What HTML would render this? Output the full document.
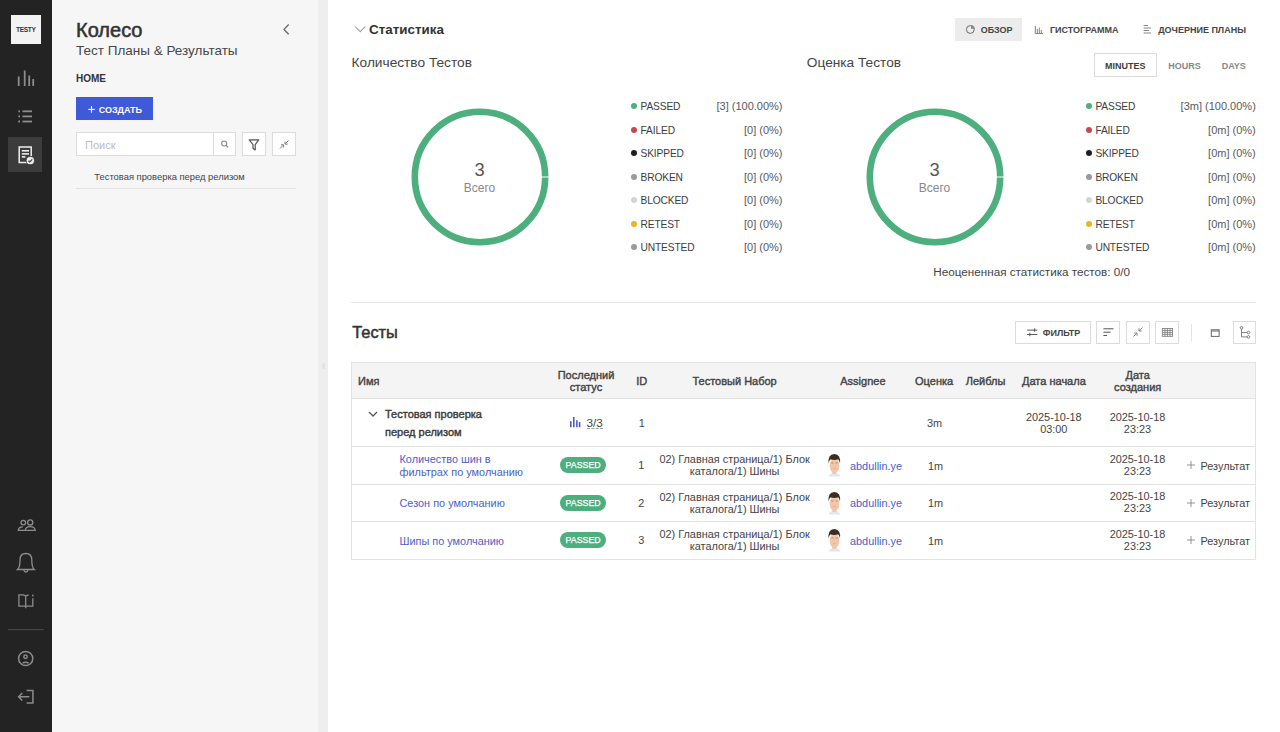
<!DOCTYPE html>
<html><head><meta charset="utf-8">
<style>
*{box-sizing:border-box;margin:0;padding:0}
html,body{width:1280px;height:732px;overflow:hidden;background:#fff;font-family:"Liberation Sans",sans-serif;color:#333}
.abs{position:absolute}
.t{position:absolute;white-space:nowrap;line-height:1}
svg{overflow:visible}
</style></head>
<body>
<div class="abs" style="left:0px;top:0px;width:52px;height:732px;background:#232323;"></div>
<div class="abs" style="left:11px;top:15px;width:30px;height:29px;background:#f3f3f3;"></div>
<div class="t" style="left:-274.20px;width:600px;text-align:center;top:27.00px;font-size:6.6px;font-weight:bold;color:#333;letter-spacing:-0.35px;">TESTY</div>
<svg class="abs" style="left:0;top:60px" width="52" height="30" viewBox="0 60 52 30">
<g stroke="#8c8c8c" stroke-width="1.8" stroke-linecap="butt">
<line x1="18.7" y1="86" x2="18.7" y2="76.5"/>
<line x1="24.7" y1="86" x2="24.7" y2="70.5"/>
<line x1="29.2" y1="86" x2="29.2" y2="75.5"/>
<line x1="33.2" y1="86" x2="33.2" y2="79"/>
</g></svg>
<svg class="abs" style="left:0;top:100px" width="52" height="30" viewBox="0 100 52 30">
<g stroke="#8c8c8c" stroke-width="1.8">
<line x1="22.5" y1="111.3" x2="32" y2="111.3"/>
<line x1="22.5" y1="116.4" x2="32" y2="116.4"/>
<line x1="22.5" y1="121.5" x2="32" y2="121.5"/>
<line x1="18.3" y1="111.3" x2="20" y2="111.3"/>
<line x1="18.3" y1="116.4" x2="20" y2="116.4"/>
<line x1="18.3" y1="121.5" x2="20" y2="121.5"/>
</g></svg>
<div class="abs" style="left:8px;top:137px;width:34px;height:35px;background:#3c3c3c;"></div>
<svg class="abs" style="left:0;top:137px" width="52" height="35" viewBox="0 137 52 35">
<path d="M28.5 162.5 H19.2 V147 H31.2 V156" fill="none" stroke="#eee" stroke-width="1.5"/>
<g stroke="#eee" stroke-width="1.6"><line x1="21.8" y1="150.8" x2="29" y2="150.8"/><line x1="21.8" y1="153.9" x2="29" y2="153.9"/><line x1="21.8" y1="156.9" x2="25.4" y2="156.9"/></g>
<circle cx="30.3" cy="160.6" r="4.1" fill="#eee" stroke="#3c3c3c" stroke-width="0.8"/>
<path d="M28.4 160.8 L29.8 162 L32.2 159.4" fill="none" stroke="#3c3c3c" stroke-width="1.2"/>
</svg>
<svg class="abs" style="left:0;top:510px" width="52" height="210" viewBox="0 510 52 210">
<g fill="none" stroke="#8c8c8c" stroke-width="1.3">
<circle cx="23.3" cy="522.6" r="2.3"/><path d="M25.5 530.3 H18.3 Q18.6 526.9 22.8 526.8"/>
<circle cx="30.2" cy="522.4" r="2.6"/><path d="M25.2 530.3 Q25.6 526.6 30.2 526.6 Q34.8 526.6 35.2 530.3 Z"/>
<path d="M17.5 569.5 H34.3 Q31.8 567.5 31.8 560 Q31.8 553.5 25.9 553.5 Q20 553.5 20 560 Q20 567.5 17.5 569.5 Z"/>
<path d="M23.8 569.8 Q24.3 572 25.9 572 Q27.5 572 28 569.8"/>
<path d="M25.7 595.9 L23 594.8 H18.9 V606.2 H32.8 V598.3 M25.7 595.9 L28.6 594.8 M25.7 595.9 V608.2"/>
<line x1="32.8" y1="594.6" x2="32.8" y2="596.4"/>
<g stroke-width="1.5"><circle cx="25.7" cy="658.5" r="7.1"/><circle cx="25.5" cy="656.8" r="1.7"/><path d="M22.6 663.2 Q25.6 661.2 28.6 663.2"/>
<path d="M26.6 690.5 H32.9 V703 H26.6"/><path d="M29.3 696.8 H18.6 M22.3 693 L18.6 696.8 L22.3 700.6"/></g>
</g>
<line x1="8" y1="629.6" x2="43.7" y2="629.6" stroke="#444" stroke-width="1.2"/>
</svg>
<div class="abs" style="left:52px;top:0px;width:266px;height:732px;background:#f6f6f6;"></div>
<div class="abs" style="left:318px;top:0px;width:10px;height:732px;background:#eeeeee;"></div>
<div class="abs" style="left:322px;top:363px;width:3px;height:6px;border-radius:1.5px;background:#e3e3e3"></div>
<div class="t" style="left:76.00px;top:20.00px;font-size:20px;color:#333;-webkit-text-stroke:0.55px #333;">Колесо</div>
<div class="t" style="left:76.00px;top:44.00px;font-size:13.5px;color:#474747;">Тест Планы &amp; Результаты</div>
<svg class="abs" style="left:278px;top:20px" width="16" height="20" viewBox="278 20 16 20"><path d="M288.7 24.5 L284 29.4 L288.7 34.3" fill="none" stroke="#666" stroke-width="1.3"/></svg>
<div class="t" style="left:76.00px;top:74.00px;font-size:10px;font-weight:bold;color:#333;">HOME</div>
<div class="abs" style="left:76px;top:97px;width:77px;height:23px;background:#3e5ad9;"></div>
<svg class="abs" style="left:86px;top:102px" width="12" height="14" viewBox="86 102 12 14"><g stroke="#fff" stroke-width="1.1"><line x1="88.2" y1="109.4" x2="94.8" y2="109.4"/><line x1="91.5" y1="106.1" x2="91.5" y2="112.7"/></g></svg>
<div class="t" style="left:98.70px;top:106.00px;font-size:9px;font-weight:bold;color:#fff;">СОЗДАТЬ</div>
<div class="abs" style="left:76px;top:132px;width:160px;height:24px;background:#fff;border:1px solid #dcdcdc;"></div>
<div class="abs" style="left:213px;top:132px;width:1px;height:24px;background:#dcdcdc;"></div>
<div class="t" style="left:85.00px;top:140.00px;font-size:11px;color:#bdbdbd;">Поиск</div>
<svg class="abs" style="left:218px;top:138px" width="14" height="14" viewBox="218 138 14 14"><circle cx="224.2" cy="143.5" r="2.5" fill="none" stroke="#888" stroke-width="1.1"/><line x1="226" y1="145.3" x2="228.1" y2="147.4" stroke="#888" stroke-width="1.3"/></svg>
<div class="abs" style="left:242px;top:132px;width:24px;height:24px;background:#fff;border:1px solid #dcdcdc;"></div>
<svg class="abs" style="left:246px;top:137px" width="16" height="16" viewBox="246 137 16 16"><path d="M249.3 139.8 H258.7 L255.2 144.7 V150 L253 148.2 V144.7 Z" fill="none" stroke="#555" stroke-width="1.2" stroke-linejoin="round"/></svg>
<div class="abs" style="left:272px;top:132px;width:24px;height:24px;background:#fff;border:1px solid #dcdcdc;"></div>
<svg class="abs" style="left:276px;top:137px" width="16" height="16" viewBox="276 137 16 16"><g fill="none" stroke="#777" stroke-width="1"><path d="M280 148.5 L283 145.5 M281 144.8 H283.6 V147.4"/><path d="M288.5 140.5 L285.5 143.5 M287.6 144.1 H285 V141.5"/></g></svg>
<div class="t" style="left:94.30px;top:172.00px;font-size:9.4px;color:#444;">Тестовая проверка перед релизом</div>
<div class="abs" style="left:76px;top:188px;width:220px;height:1px;background:#e2e2e2;"></div>
<svg class="abs" style="left:352px;top:22px" width="16" height="14" viewBox="352 22 16 14"><path d="M355.2 26.6 L360.2 31.6 L365.2 26.6" fill="none" stroke="#a3a3a3" stroke-width="1.2"/></svg>
<div class="t" style="left:369.00px;top:23.00px;font-size:13.4px;font-weight:bold;color:#333;">Статистика</div>
<div class="abs" style="left:955px;top:18px;width:67px;height:23px;background:#ececec;"></div>
<svg class="abs" style="left:962px;top:24px" width="14" height="12" viewBox="962 24 14 12"><g fill="none" stroke="#6a6a6a" stroke-width="1"><circle cx="970.3" cy="29.5" r="3.9"/></g><path d="M971 24.9 A4.4 4.4 0 0 1 974.9 28.8 H971 Z" fill="#888"/></svg>
<div class="t" style="left:980.70px;top:26.00px;font-size:9px;font-weight:bold;color:#454545;">ОБЗОР</div>
<svg class="abs" style="left:1033px;top:23px" width="12" height="12" viewBox="1033 23 12 12"><g stroke="#777" stroke-width="0.9"><path d="M1035.3 25.8 V33.5 H1043" fill="none"/><line x1="1037.3" y1="33" x2="1037.3" y2="29"/><line x1="1039.3" y1="33" x2="1039.3" y2="27.5"/><line x1="1041.3" y1="33" x2="1041.3" y2="30"/></g></svg>
<div class="t" style="left:1050.00px;top:26.00px;font-size:9px;font-weight:bold;color:#454545;">ГИСТОГРАММА</div>
<svg class="abs" style="left:1141px;top:23px" width="12" height="12" viewBox="1141 23 12 12"><g stroke="#777" stroke-width="0.9"><line x1="1143.7" y1="25.5" x2="1148" y2="25.5"/><line x1="1143.7" y1="28" x2="1151" y2="28"/><line x1="1143.7" y1="30.5" x2="1149" y2="30.5"/><line x1="1143.7" y1="33" x2="1151" y2="33"/></g></svg>
<div class="t" style="left:1158.20px;top:26.00px;font-size:9px;font-weight:bold;color:#454545;">ДОЧЕРНИЕ ПЛАНЫ</div>
<div class="t" style="left:351.60px;top:56.00px;font-size:13.7px;color:#444;">Количество Тестов</div>
<div class="t" style="left:806.80px;top:56.00px;font-size:13.7px;color:#444;">Оценка Тестов</div>
<div class="abs" style="left:1094px;top:53px;width:63px;height:24px;background:#fff;border:1px solid #dcdcdc;"></div>
<div class="t" style="left:1105.00px;top:62.00px;font-size:9px;font-weight:bold;color:#3d3d3d;">MINUTES</div>
<div class="t" style="left:1168.20px;top:62.00px;font-size:9px;font-weight:bold;color:#888;">HOURS</div>
<div class="t" style="left:1221.70px;top:62.00px;font-size:9px;font-weight:bold;color:#888;">DAYS</div>
<svg class="abs" style="left:404.5px;top:101.80000000000001px" width="150" height="150" viewBox="404.5 101.80000000000001 150 150">
<circle cx="479.5" cy="176.8" r="65.2" fill="none" stroke="#4caf7d" stroke-width="6.6"/>
<line x1="540.5" y1="176.8" x2="549.5" y2="176.8" stroke="#fff" stroke-width="1"/>
</svg>
<div class="t" style="left:179.50px;width:600px;text-align:center;top:161.00px;font-size:18.3px;color:#555;">3</div>
<div class="t" style="left:179.50px;width:600px;text-align:center;top:182.00px;font-size:12px;color:#888;">Всего</div>
<svg class="abs" style="left:859.5px;top:101.6px" width="150" height="150" viewBox="859.5 101.6 150 150">
<circle cx="934.5" cy="176.6" r="65.2" fill="none" stroke="#4caf7d" stroke-width="6.6"/>
<line x1="995.5" y1="176.6" x2="1004.5" y2="176.6" stroke="#fff" stroke-width="1"/>
</svg>
<div class="t" style="left:634.50px;width:600px;text-align:center;top:161.00px;font-size:18.3px;color:#555;">3</div>
<div class="t" style="left:634.50px;width:600px;text-align:center;top:182.00px;font-size:12px;color:#888;">Всего</div>
<div class="abs" style="left:631px;top:103.2px;width:6px;height:6px;border-radius:50%;background:#4caf7d"></div>
<div class="t" style="left:640.50px;top:102.00px;font-size:10.2px;color:#3d3d3d;letter-spacing:-0.12px;">PASSED</div>
<div class="t" style="left:182.50px;width:600px;text-align:right;top:101.00px;font-size:11px;color:#5a5a5a;">[3] (100.00%)</div>
<div class="abs" style="left:631px;top:126.69999999999999px;width:6px;height:6px;border-radius:50%;background:#c9474f"></div>
<div class="t" style="left:640.50px;top:126.00px;font-size:10.2px;color:#3d3d3d;letter-spacing:-0.12px;">FAILED</div>
<div class="t" style="left:182.50px;width:600px;text-align:right;top:125.00px;font-size:11px;color:#5a5a5a;">[0] (0%)</div>
<div class="abs" style="left:631px;top:150.2px;width:6px;height:6px;border-radius:50%;background:#1f1f1f"></div>
<div class="t" style="left:640.50px;top:149.00px;font-size:10.2px;color:#3d3d3d;letter-spacing:-0.12px;">SKIPPED</div>
<div class="t" style="left:182.50px;width:600px;text-align:right;top:148.00px;font-size:11px;color:#5a5a5a;">[0] (0%)</div>
<div class="abs" style="left:631px;top:173.7px;width:6px;height:6px;border-radius:50%;background:#9a9a9a"></div>
<div class="t" style="left:640.50px;top:173.00px;font-size:10.2px;color:#3d3d3d;letter-spacing:-0.12px;">BROKEN</div>
<div class="t" style="left:182.50px;width:600px;text-align:right;top:172.00px;font-size:11px;color:#5a5a5a;">[0] (0%)</div>
<div class="abs" style="left:631px;top:197.2px;width:6px;height:6px;border-radius:50%;background:#d4d4d4"></div>
<div class="t" style="left:640.50px;top:196.00px;font-size:10.2px;color:#3d3d3d;letter-spacing:-0.12px;">BLOCKED</div>
<div class="t" style="left:182.50px;width:600px;text-align:right;top:195.00px;font-size:11px;color:#5a5a5a;">[0] (0%)</div>
<div class="abs" style="left:631px;top:220.7px;width:6px;height:6px;border-radius:50%;background:#eab320"></div>
<div class="t" style="left:640.50px;top:220.00px;font-size:10.2px;color:#3d3d3d;letter-spacing:-0.12px;">RETEST</div>
<div class="t" style="left:182.50px;width:600px;text-align:right;top:219.00px;font-size:11px;color:#5a5a5a;">[0] (0%)</div>
<div class="abs" style="left:631px;top:244.2px;width:6px;height:6px;border-radius:50%;background:#9a9a9a"></div>
<div class="t" style="left:640.50px;top:243.00px;font-size:10.2px;color:#3d3d3d;letter-spacing:-0.12px;">UNTESTED</div>
<div class="t" style="left:182.50px;width:600px;text-align:right;top:242.00px;font-size:11px;color:#5a5a5a;">[0] (0%)</div>
<div class="abs" style="left:1085.8px;top:103.2px;width:6px;height:6px;border-radius:50%;background:#4caf7d"></div>
<div class="t" style="left:1095.40px;top:102.00px;font-size:10.2px;color:#3d3d3d;letter-spacing:-0.12px;">PASSED</div>
<div class="t" style="left:655.80px;width:600px;text-align:right;top:101.00px;font-size:11px;color:#5a5a5a;">[3m] (100.00%)</div>
<div class="abs" style="left:1085.8px;top:126.69999999999999px;width:6px;height:6px;border-radius:50%;background:#c9474f"></div>
<div class="t" style="left:1095.40px;top:126.00px;font-size:10.2px;color:#3d3d3d;letter-spacing:-0.12px;">FAILED</div>
<div class="t" style="left:655.80px;width:600px;text-align:right;top:125.00px;font-size:11px;color:#5a5a5a;">[0m] (0%)</div>
<div class="abs" style="left:1085.8px;top:150.2px;width:6px;height:6px;border-radius:50%;background:#1f1f1f"></div>
<div class="t" style="left:1095.40px;top:149.00px;font-size:10.2px;color:#3d3d3d;letter-spacing:-0.12px;">SKIPPED</div>
<div class="t" style="left:655.80px;width:600px;text-align:right;top:148.00px;font-size:11px;color:#5a5a5a;">[0m] (0%)</div>
<div class="abs" style="left:1085.8px;top:173.7px;width:6px;height:6px;border-radius:50%;background:#9a9a9a"></div>
<div class="t" style="left:1095.40px;top:173.00px;font-size:10.2px;color:#3d3d3d;letter-spacing:-0.12px;">BROKEN</div>
<div class="t" style="left:655.80px;width:600px;text-align:right;top:172.00px;font-size:11px;color:#5a5a5a;">[0m] (0%)</div>
<div class="abs" style="left:1085.8px;top:197.2px;width:6px;height:6px;border-radius:50%;background:#d4d4d4"></div>
<div class="t" style="left:1095.40px;top:196.00px;font-size:10.2px;color:#3d3d3d;letter-spacing:-0.12px;">BLOCKED</div>
<div class="t" style="left:655.80px;width:600px;text-align:right;top:195.00px;font-size:11px;color:#5a5a5a;">[0m] (0%)</div>
<div class="abs" style="left:1085.8px;top:220.7px;width:6px;height:6px;border-radius:50%;background:#eab320"></div>
<div class="t" style="left:1095.40px;top:220.00px;font-size:10.2px;color:#3d3d3d;letter-spacing:-0.12px;">RETEST</div>
<div class="t" style="left:655.80px;width:600px;text-align:right;top:219.00px;font-size:11px;color:#5a5a5a;">[0m] (0%)</div>
<div class="abs" style="left:1085.8px;top:244.2px;width:6px;height:6px;border-radius:50%;background:#9a9a9a"></div>
<div class="t" style="left:1095.40px;top:243.00px;font-size:10.2px;color:#3d3d3d;letter-spacing:-0.12px;">UNTESTED</div>
<div class="t" style="left:655.80px;width:600px;text-align:right;top:242.00px;font-size:11px;color:#5a5a5a;">[0m] (0%)</div>
<div class="t" style="left:933.30px;top:266.00px;font-size:11.7px;color:#444;">Неоцененная статистика тестов: 0/0</div>
<div class="abs" style="left:351px;top:302px;width:905px;height:1px;background:#e6e6e6;"></div>
<div class="t" style="left:352.20px;top:324.00px;font-size:16.4px;color:#333;-webkit-text-stroke:0.5px #333;">Тесты</div>
<div class="abs" style="left:1015px;top:321px;width:76px;height:23px;background:#fff;border:1px solid #dcdcdc;"></div>
<svg class="abs" style="left:1025px;top:326px" width="14" height="12" viewBox="1025 326 14 12"><g stroke="#555" stroke-width="1"><line x1="1027.2" y1="330.1" x2="1037.3" y2="330.1"/><line x1="1027.2" y1="334.5" x2="1037.3" y2="334.5"/><line x1="1034.6" y1="328.4" x2="1034.6" y2="331.8"/><line x1="1029.8" y1="332.8" x2="1029.8" y2="336.2"/></g></svg>
<div class="t" style="left:1042.80px;top:329.00px;font-size:9px;font-weight:bold;color:#454545;">ФИЛЬТР</div>
<div class="abs" style="left:1096px;top:321px;width:24px;height:23px;background:#fff;border:1px solid #dcdcdc;"></div>
<div class="abs" style="left:1126px;top:321px;width:24px;height:23px;background:#fff;border:1px solid #dcdcdc;"></div>
<div class="abs" style="left:1155px;top:321px;width:24px;height:23px;background:#fff;border:1px solid #dcdcdc;"></div>
<div class="abs" style="left:1233px;top:321px;width:23px;height:23px;background:#fff;border:1px solid #dcdcdc;"></div>
<svg class="abs" style="left:1100px;top:325px" width="16" height="14" viewBox="1100 325 16 14"><g stroke="#555" stroke-width="1"><line x1="1103.4" y1="328.8" x2="1113.5" y2="328.8"/><line x1="1103.4" y1="332.2" x2="1110.5" y2="332.2"/><line x1="1103.4" y1="335.5" x2="1107" y2="335.5"/></g></svg>
<svg class="abs" style="left:1130px;top:325px" width="16" height="14" viewBox="1130 325 16 14"><g fill="none" stroke="#777" stroke-width="0.9"><path d="M1133.5 336.5 L1136.6 333.4 M1134.3 333 H1137 V335.7"/><path d="M1142.5 327.5 L1139.4 330.6 M1141.7 331 H1139 V328.3"/></g></svg>
<svg class="abs" style="left:1160px;top:326px" width="16" height="12" viewBox="1160 326 16 12"><g fill="none" stroke="#777" stroke-width="0.8"><rect x="1162.3" y="328.5" width="10.3" height="7.8"/><line x1="1162.3" y1="330.45" x2="1172.6" y2="330.45"/><line x1="1162.3" y1="332.4" x2="1172.6" y2="332.4"/><line x1="1162.3" y1="334.35" x2="1172.6" y2="334.35"/><line x1="1164.9" y1="328.5" x2="1164.9" y2="336.3"/><line x1="1167.45" y1="328.5" x2="1167.45" y2="336.3"/><line x1="1170" y1="328.5" x2="1170" y2="336.3"/></g></svg>
<div class="abs" style="left:1191px;top:324px;width:1px;height:17px;background:#e3e3e3;"></div>
<svg class="abs" style="left:1208px;top:326px" width="14" height="14" viewBox="1208 326 14 14"><g fill="none" stroke="#666" stroke-width="1"><rect x="1211.3" y="329.8" width="7.8" height="6.6"/><line x1="1211.3" y1="331" x2="1219.1" y2="331"/></g></svg>
<svg class="abs" style="left:1237px;top:324px" width="16" height="16" viewBox="1237 324 16 16"><g fill="none" stroke="#777" stroke-width="0.9"><circle cx="1241.5" cy="327.8" r="1.3"/><path d="M1241.5 329.1 V336.9 H1247.3 M1241.5 332.5 H1247.3"/><circle cx="1248.5" cy="332.5" r="1.3"/><circle cx="1248.5" cy="336.9" r="1.3"/></g></svg>
<div class="abs" style="left:351px;top:362px;width:905px;height:198px;background:#fff;border:1px solid #e3e3e3;"></div>
<div class="abs" style="left:352px;top:363px;width:903px;height:35px;background:#f4f4f4;"></div>
<div class="abs" style="left:352px;top:398px;width:903px;height:1px;background:#e3e3e3;"></div>
<div class="t" style="left:358.00px;top:376.00px;font-size:11px;color:#444;-webkit-text-stroke:0.4px #444;">Имя</div>
<div class="t" style="left:286.00px;width:600px;text-align:center;top:370.00px;font-size:11px;color:#444;-webkit-text-stroke:0.4px #444;">Последний</div>
<div class="t" style="left:286.00px;width:600px;text-align:center;top:382.00px;font-size:11px;color:#444;-webkit-text-stroke:0.4px #444;">статус</div>
<div class="t" style="left:636.30px;top:376.00px;font-size:11px;color:#444;-webkit-text-stroke:0.4px #444;">ID</div>
<div class="t" style="left:434.60px;width:600px;text-align:center;top:376.00px;font-size:11px;color:#444;-webkit-text-stroke:0.4px #444;">Тестовый Набор</div>
<div class="t" style="left:562.90px;width:600px;text-align:center;top:376.00px;font-size:11px;color:#444;-webkit-text-stroke:0.4px #444;">Assignee</div>
<div class="t" style="left:634.10px;width:600px;text-align:center;top:376.00px;font-size:11px;color:#444;-webkit-text-stroke:0.4px #444;">Оценка</div>
<div class="t" style="left:685.50px;width:600px;text-align:center;top:376.00px;font-size:11px;color:#444;-webkit-text-stroke:0.4px #444;">Лейблы</div>
<div class="t" style="left:753.90px;width:600px;text-align:center;top:376.00px;font-size:11px;color:#444;-webkit-text-stroke:0.4px #444;">Дата начала</div>
<div class="t" style="left:837.70px;width:600px;text-align:center;top:370.00px;font-size:11px;color:#444;-webkit-text-stroke:0.4px #444;">Дата</div>
<div class="t" style="left:837.70px;width:600px;text-align:center;top:382.00px;font-size:11px;color:#444;-webkit-text-stroke:0.4px #444;">создания</div>
<svg class="abs" style="left:366px;top:408px" width="14" height="12" viewBox="366 408 14 12"><path d="M369 412 L373 416 L377 412" fill="none" stroke="#555" stroke-width="1.3"/></svg>
<div class="t" style="left:385.00px;top:409.00px;font-size:11px;color:#3a3a3a;-webkit-text-stroke:0.4px #3a3a3a;">Тестовая проверка</div>
<div class="t" style="left:385.00px;top:427.00px;font-size:11px;color:#3a3a3a;-webkit-text-stroke:0.4px #3a3a3a;">перед релизом</div>
<svg class="abs" style="left:568px;top:415px" width="14" height="14" viewBox="568 415 14 14"><g stroke="#3f52c6" stroke-width="1.5"><line x1="570.8" y1="427.2" x2="570.8" y2="421.2"/><line x1="573.8" y1="427.2" x2="573.8" y2="417.1"/><line x1="576.9" y1="427.2" x2="576.9" y2="420.3"/><line x1="579.6" y1="427.2" x2="579.6" y2="422"/></g></svg>
<div class="t" style="left:586.50px;top:417.00px;font-size:11.7px;color:#444;">3/3</div>
<div class="abs" style="left:586.7px;top:428px;width:16.299999999999955px;height:1px;border-top:1px dashed #9a9a9a;"></div>
<div class="t" style="left:638.80px;top:418.00px;font-size:10.9px;color:#444;">1</div>
<div class="t" style="left:927.00px;top:418.00px;font-size:10.9px;color:#444;">3m</div>
<div class="t" style="left:753.80px;width:600px;text-align:center;top:412.00px;font-size:10.9px;color:#444;">2025-10-18</div>
<div class="t" style="left:753.80px;width:600px;text-align:center;top:424.00px;font-size:10.9px;color:#444;">03:00</div>
<div class="t" style="left:837.50px;width:600px;text-align:center;top:412.00px;font-size:10.9px;color:#444;">2025-10-18</div>
<div class="t" style="left:837.50px;width:600px;text-align:center;top:424.00px;font-size:10.9px;color:#444;">23:23</div>
<div class="abs" style="left:352px;top:446px;width:903px;height:1px;background:#e3e3e3;"></div>
<div class="t" style="left:399.50px;top:454.00px;font-size:10.9px;color:#4c60c8;">Количество шин в</div>
<div class="t" style="left:399.50px;top:467.00px;font-size:10.9px;color:#4c60c8;">фильтрах по умолчанию</div>
<div class="abs" style="left:560px;top:457.00px;width:46px;height:16px;border-radius:8px;background:#4caf7d"></div>
<div class="t" style="left:283.10px;width:600px;text-align:center;top:461.00px;font-size:8.8px;color:#fff;-webkit-text-stroke:0.25px #fff;">PASSED</div>
<div class="t" style="left:638.30px;top:460.00px;font-size:10.9px;color:#444;">1</div>
<div class="t" style="left:434.60px;width:600px;text-align:center;top:454.00px;font-size:10.9px;color:#444;">02) Главная страница/1) Блок</div>
<div class="t" style="left:434.60px;width:600px;text-align:center;top:466.00px;font-size:10.9px;color:#444;">каталога/1) Шины</div>
<svg class="abs" style="left:824px;top:452.00px" width="20" height="26" viewBox="0 0 20 26">
<path d="M4.5 24.5 Q5.5 21 10.4 21 Q15.5 21 16.5 24.5 Z" fill="#dfe5f2"/>
<rect x="8.4" y="19" width="4" height="3" fill="#f1c9a8"/>
<ellipse cx="10.5" cy="13.8" rx="4.8" ry="7.2" fill="#f3c6aa"/>
<g fill="#c98f73"><ellipse cx="8.3" cy="10.9" rx="1.3" ry="0.6"/><ellipse cx="12.7" cy="10.9" rx="1.3" ry="0.6"/></g>
<ellipse cx="10.5" cy="16.5" rx="2" ry="0.8" fill="#eab39a"/>
<path d="M4.6 11.8 Q3.6 2 10.3 1.9 Q17 2 16 11.8 Q15.3 7.8 14 7.6 Q10.3 8.4 6.6 7.6 Q5.3 7.8 4.6 11.8 Z" fill="#3b2c24"/>
</svg>
<div class="t" style="left:850.00px;top:461.00px;font-size:10.9px;color:#4c60c8;">abdullin.ye</div>
<div class="t" style="left:928.00px;top:461.00px;font-size:10.9px;color:#444;">1m</div>
<div class="t" style="left:837.50px;width:600px;text-align:center;top:454.00px;font-size:10.9px;color:#444;">2025-10-18</div>
<div class="t" style="left:837.50px;width:600px;text-align:center;top:466.00px;font-size:10.9px;color:#444;">23:23</div>
<svg class="abs" style="left:1185px;top:459.00px" width="12" height="12" viewBox="0 0 12 12"><g stroke="#888" stroke-width="0.9"><line x1="2" y1="6" x2="10" y2="6"/><line x1="6" y1="2" x2="6" y2="10"/></g></svg>
<div class="t" style="left:1200.50px;top:461.00px;font-size:10.9px;color:#444;">Результат</div>
<div class="abs" style="left:352px;top:484px;width:903px;height:1px;background:#e3e3e3;"></div>
<div class="t" style="left:399.50px;top:498.00px;font-size:10.9px;color:#4c60c8;">Сезон по умолчанию</div>
<div class="abs" style="left:560px;top:494.50px;width:46px;height:16px;border-radius:8px;background:#4caf7d"></div>
<div class="t" style="left:283.10px;width:600px;text-align:center;top:499.00px;font-size:8.8px;color:#fff;-webkit-text-stroke:0.25px #fff;">PASSED</div>
<div class="t" style="left:638.30px;top:498.00px;font-size:10.9px;color:#444;">2</div>
<div class="t" style="left:434.60px;width:600px;text-align:center;top:492.00px;font-size:10.9px;color:#444;">02) Главная страница/1) Блок</div>
<div class="t" style="left:434.60px;width:600px;text-align:center;top:504.00px;font-size:10.9px;color:#444;">каталога/1) Шины</div>
<svg class="abs" style="left:824px;top:489.50px" width="20" height="26" viewBox="0 0 20 26">
<path d="M4.5 24.5 Q5.5 21 10.4 21 Q15.5 21 16.5 24.5 Z" fill="#dfe5f2"/>
<rect x="8.4" y="19" width="4" height="3" fill="#f1c9a8"/>
<ellipse cx="10.5" cy="13.8" rx="4.8" ry="7.2" fill="#f3c6aa"/>
<g fill="#c98f73"><ellipse cx="8.3" cy="10.9" rx="1.3" ry="0.6"/><ellipse cx="12.7" cy="10.9" rx="1.3" ry="0.6"/></g>
<ellipse cx="10.5" cy="16.5" rx="2" ry="0.8" fill="#eab39a"/>
<path d="M4.6 11.8 Q3.6 2 10.3 1.9 Q17 2 16 11.8 Q15.3 7.8 14 7.6 Q10.3 8.4 6.6 7.6 Q5.3 7.8 4.6 11.8 Z" fill="#3b2c24"/>
</svg>
<div class="t" style="left:850.00px;top:498.00px;font-size:10.9px;color:#4c60c8;">abdullin.ye</div>
<div class="t" style="left:928.00px;top:498.00px;font-size:10.9px;color:#444;">1m</div>
<div class="t" style="left:837.50px;width:600px;text-align:center;top:491.00px;font-size:10.9px;color:#444;">2025-10-18</div>
<div class="t" style="left:837.50px;width:600px;text-align:center;top:503.00px;font-size:10.9px;color:#444;">23:23</div>
<svg class="abs" style="left:1185px;top:496.50px" width="12" height="12" viewBox="0 0 12 12"><g stroke="#888" stroke-width="0.9"><line x1="2" y1="6" x2="10" y2="6"/><line x1="6" y1="2" x2="6" y2="10"/></g></svg>
<div class="t" style="left:1200.50px;top:498.00px;font-size:10.9px;color:#444;">Результат</div>
<div class="abs" style="left:352px;top:521px;width:903px;height:1px;background:#e3e3e3;"></div>
<div class="t" style="left:399.50px;top:536.00px;font-size:10.9px;color:#4c60c8;">Шипы по умолчанию</div>
<div class="abs" style="left:560px;top:532.00px;width:46px;height:16px;border-radius:8px;background:#4caf7d"></div>
<div class="t" style="left:283.10px;width:600px;text-align:center;top:536.00px;font-size:8.8px;color:#fff;-webkit-text-stroke:0.25px #fff;">PASSED</div>
<div class="t" style="left:638.30px;top:535.00px;font-size:10.9px;color:#444;">3</div>
<div class="t" style="left:434.60px;width:600px;text-align:center;top:529.00px;font-size:10.9px;color:#444;">02) Главная страница/1) Блок</div>
<div class="t" style="left:434.60px;width:600px;text-align:center;top:541.00px;font-size:10.9px;color:#444;">каталога/1) Шины</div>
<svg class="abs" style="left:824px;top:527.00px" width="20" height="26" viewBox="0 0 20 26">
<path d="M4.5 24.5 Q5.5 21 10.4 21 Q15.5 21 16.5 24.5 Z" fill="#dfe5f2"/>
<rect x="8.4" y="19" width="4" height="3" fill="#f1c9a8"/>
<ellipse cx="10.5" cy="13.8" rx="4.8" ry="7.2" fill="#f3c6aa"/>
<g fill="#c98f73"><ellipse cx="8.3" cy="10.9" rx="1.3" ry="0.6"/><ellipse cx="12.7" cy="10.9" rx="1.3" ry="0.6"/></g>
<ellipse cx="10.5" cy="16.5" rx="2" ry="0.8" fill="#eab39a"/>
<path d="M4.6 11.8 Q3.6 2 10.3 1.9 Q17 2 16 11.8 Q15.3 7.8 14 7.6 Q10.3 8.4 6.6 7.6 Q5.3 7.8 4.6 11.8 Z" fill="#3b2c24"/>
</svg>
<div class="t" style="left:850.00px;top:536.00px;font-size:10.9px;color:#4c60c8;">abdullin.ye</div>
<div class="t" style="left:928.00px;top:536.00px;font-size:10.9px;color:#444;">1m</div>
<div class="t" style="left:837.50px;width:600px;text-align:center;top:529.00px;font-size:10.9px;color:#444;">2025-10-18</div>
<div class="t" style="left:837.50px;width:600px;text-align:center;top:541.00px;font-size:10.9px;color:#444;">23:23</div>
<svg class="abs" style="left:1185px;top:534.00px" width="12" height="12" viewBox="0 0 12 12"><g stroke="#888" stroke-width="0.9"><line x1="2" y1="6" x2="10" y2="6"/><line x1="6" y1="2" x2="6" y2="10"/></g></svg>
<div class="t" style="left:1200.50px;top:536.00px;font-size:10.9px;color:#444;">Результат</div>
</body></html>
